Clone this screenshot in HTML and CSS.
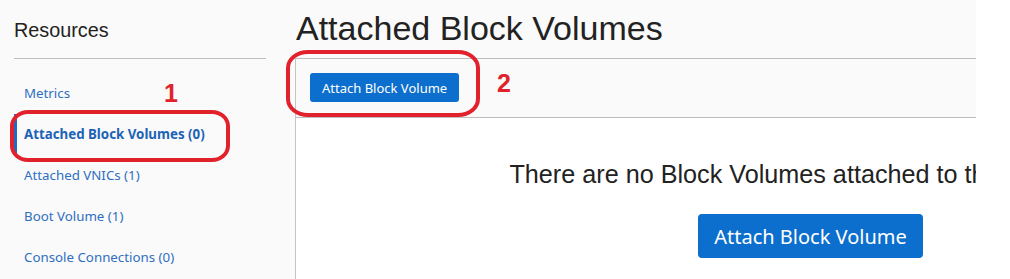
FILE: index.html
```html
<!DOCTYPE html>
<html>
<head>
<meta charset="utf-8">
<link rel="stylesheet" href="styles.css">
</head>
<body>
<div class="page">
  <aside class="sidebar">
    <div class="res-title">Resources</div>
    <ul class="nav">
      <li class="nav-item">Metrics</li>
      <li class="nav-item active">Attached Block Volumes (0)</li>
      <li class="nav-item">Attached VNICs (1)</li>
      <li class="nav-item">Boot Volume (1)</li>
      <li class="nav-item">Console Connections (0)</li>
    </ul>
  </aside>
  <main class="main">
    <h1 class="title">Attached Block Volumes</h1>
    <div class="panel">
      <div class="toolbar">
        <button class="btn btn-sm">Attach Block Volume</button>
      </div>
      <div class="empty">
        <p class="empty-text">There are no Block Volumes attached to this instance.</p>
        <button class="btn btn-lg">Attach Block Volume</button>
      </div>
    </div>
  </main>
  <div class="mark mark-1"></div>
  <div class="num num-1">1</div>
  <div class="mark mark-2"></div>
  <div class="num num-2">2</div>
</div>
</body>
</html>
```
FILE: styles.css
```css
html, body {
  margin: 0;
  padding: 0;
  background: #ffffff;
}
.page {
  position: relative;
  width: 976px;
  height: 279px;
  overflow: hidden;
  display: flex;
  background: #fafafa;
  font-family: "Liberation Sans", Arial, sans-serif;
}
.sidebar {
  width: 295px;
  flex-shrink: 0;
  padding-left: 14px;
  box-sizing: border-box;
}
.res-title {
  width: 252px;
  height: 58px;
  line-height: 60px;
  font-size: 19.8px;
  color: #222;
  border-bottom: 1px solid #bfbfbf;
}
.nav {
  list-style: none;
  margin: 0;
  padding: 14px 0 0 0;
}
.nav-item {
  height: 41px;
  line-height: 41px;
  padding-left: 10px;
  font-family: "Noto Sans", "Open Sans", sans-serif;
  font-size: 13.3px;
  color: #2f6fbf;
}
.nav-item.active {
  border-left: 3px solid #1f6bc2;
  padding-left: 7px;
  font-weight: bold;
  color: #1c63b6;
}
.main {
  width: 1030px;
  flex-shrink: 0;
  display: flex;
  flex-direction: column;
}
.title {
  margin: 0;
  height: 58px;
  line-height: 56px;
  padding-left: 1px;
  font-size: 34px;
  font-weight: normal;
  color: #222;
}
.panel {
  flex: 1;
  border-left: 1px solid #c4c4c4;
  background: #ffffff;
}
.toolbar {
  height: 60px;
  box-sizing: border-box;
  border-top: 1px solid #bdbdbd;
  border-bottom: 1px solid #bdbdbd;
  background: #fafafa;
  padding: 14px 0 0 14px;
}
.btn {
  background: #0c6fcd;
  color: #ffffff;
  border: none;
  font-family: "Noto Sans", "Open Sans", sans-serif;
  cursor: pointer;
}
.btn-sm {
  height: 29px;
  padding: 0 12px;
  border-radius: 3px;
  font-size: 13px;
}
.empty {
  display: flex;
  flex-direction: column;
  align-items: center;
}
.empty-text {
  margin: 42px 0 0 0;
  font-size: 25.2px;
  line-height: 28px;
  color: #222;
  white-space: nowrap;
}
.btn-lg {
  margin-top: 26px;
  height: 44px;
  padding: 0 16px;
  border-radius: 4px;
  font-size: 20px;
}
.mark {
  position: absolute;
  border: 4px solid #e1222c;
  box-sizing: border-box;
}
.mark-1 {
  left: 10px;
  top: 110px;
  width: 220px;
  height: 52px;
  border-radius: 18px / 16px;
}
.mark-2 {
  left: 286px;
  top: 50px;
  width: 194px;
  height: 67px;
  border-radius: 22px / 18px;
}
.num {
  position: absolute;
  color: #e1222c;
  font-weight: bold;
  font-size: 25px;
  line-height: 25px;
}
.num-1 {
  left: 164px;
  top: 81px;
}
.num-2 {
  left: 497px;
  top: 71px;
}
```
